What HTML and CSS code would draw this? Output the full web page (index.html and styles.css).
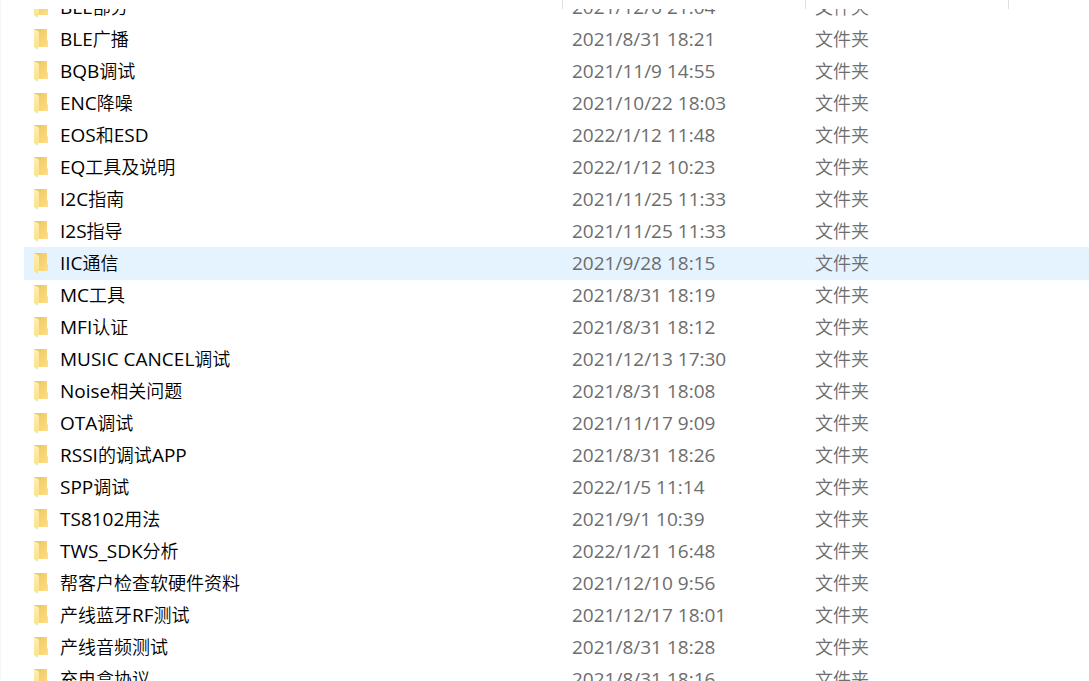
FILE: index.html
```
<!DOCTYPE html>
<html lang="zh-CN">
<head>
  <meta charset="UTF-8" />
  <meta name="viewport" content="width=device-width, initial-scale=1.0"/>
  <title>文件夹</title>
  <link rel="stylesheet" href="styles.css">
</head>
<body>
  <svg class="defs" width="0" height="0" aria-hidden="true">
    <defs>
      <linearGradient id="back" x1="0" y1="0" x2="1" y2="1">
        <stop offset="0" stop-color="#e6c364"/>
        <stop offset="0.4" stop-color="#f2cf70"/>
        <stop offset="1" stop-color="#ffdf86"/>
      </linearGradient>
      <linearGradient id="front" x1="0" y1="0" x2="0" y2="1">
        <stop offset="0" stop-color="#ffeeb0"/>
        <stop offset="1" stop-color="#fde08c"/>
      </linearGradient>
    </defs>
    <symbol id="folder" viewBox="0 0 14 22">
      <path fill="url(#back)" d="M0 1H13V12L14 13V19H0Z"/>
      <path fill="url(#front)" d="M0 1L4 3Q5 4 5 5V18L4 19V22L0 19Z"/>
    </symbol>
  </svg>
  <div class="header">
    <span class="col-name"></span>
    <span class="col-date"></span>
    <span class="col-type"></span>
  </div>
  <div class="list">
    <table>
      <colgroup>
        <col class="col-name">
        <col class="col-date">
        <col>
      </colgroup>
      <tbody id="files"></tbody>
    </table>
  </div>

  <script>
    const files = [
      ["BLE部分", "2021/12/6 21:04"],
      ["BLE广播", "2021/8/31 18:21"],
      ["BQB调试", "2021/11/9 14:55"],
      ["ENC降噪", "2021/10/22 18:03"],
      ["EOS和ESD", "2022/1/12 11:48"],
      ["EQ工具及说明", "2022/1/12 10:23"],
      ["I2C指南", "2021/11/25 11:33"],
      ["I2S指导", "2021/11/25 11:33"],
      ["IIC通信", "2021/9/28 18:15"],
      ["MC工具", "2021/8/31 18:19"],
      ["MFI认证", "2021/8/31 18:12"],
      ["MUSIC CANCEL调试", "2021/12/13 17:30"],
      ["Noise相关问题", "2021/8/31 18:08"],
      ["OTA调试", "2021/11/17 9:09"],
      ["RSSI的调试APP", "2021/8/31 18:26"],
      ["SPP调试", "2022/1/5 11:14"],
      ["TS8102用法", "2021/9/1 10:39"],
      ["TWS_SDK分析", "2022/1/21 16:48"],
      ["帮客户检查软硬件资料", "2021/12/10 9:56"],
      ["产线蓝牙RF测试", "2021/12/17 18:01"],
      ["产线音频测试", "2021/8/31 18:28"],
      ["充电盒协议", "2021/8/31 18:16"]
    ];
    const selected = "IIC通信";

    // latin letters run a bit small next to the chinese ones
    function label(name) {
      return name.replace(/[\w ]+/g, '<span class="latin">$&</span>');
    }

    document.getElementById("files").innerHTML = files.map(([name, date]) => `
      <tr class="${name === selected ? "selected" : ""}">
        <td class="file"><div class="name"><svg class="icon" aria-hidden="true"><use href="#folder"/></svg><span>${label(name)}</span></div></td>
        <td class="date latin">${date}</td>
        <td class="type">文件夹</td>
      </tr>`).join("");
  </script>
</body>
</html>
```
FILE: styles.css
```
body {
  margin: 0;
  height: 100vh;
  display: flex;
  flex-direction: column;
  overflow: hidden;
  box-sizing: border-box;
  border-left: 1px solid #f5f5f5;
  padding-left: 23px;
  background: #fff;
  color: #000;
  font-family: "Open Sans", "Noto Sans CJK SC", sans-serif;
  font-size: 18px;
  font-weight: 350;
}
.defs {
  display: block;
  flex: none;
}
.header {
  display: flex;
  flex: none;
  height: 9px;
}
.header span {
  box-sizing: border-box;
  border-right: 1px solid #e0e0e0;
}
.col-name {
  width: 539px;
}
.col-date {
  width: 243px;
}
.col-type {
  width: 203px;
}
.list {
  flex: 1;
  min-height: 0;
  overflow: hidden;
}
/* list is scrolled a little past its first row */
table {
  width: 100%;
  margin-top: -18px;
  table-layout: fixed;
  border-collapse: collapse;
}
td {
  height: 32px;
  padding: 0 9px;
  line-height: 32px;
  white-space: nowrap;
}
.file {
  padding-left: 10px;
}
.selected {
  background: #e5f3ff;
  box-shadow: 0 1px #e5f3ff;
}
.name {
  display: flex;
  align-items: center;
  gap: 12px;
  height: 32px;
}
.icon {
  width: 14px;
  height: 22px;
}
.latin {
  font-size: 19px;
  font-weight: 400;
}
.date,
.type {
  color: #6d6d6d;
}
```
